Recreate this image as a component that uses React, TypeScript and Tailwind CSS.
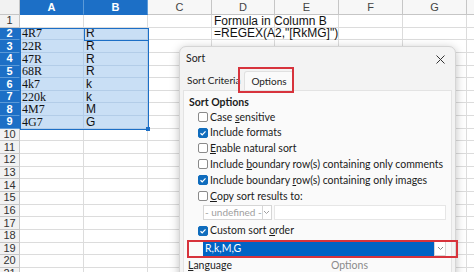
import React from 'react';

const cols = [
    { name: 'A', w: 'w-[64px]' },
    { name: 'B', w: 'w-[64px]' },
    { name: 'C', w: 'w-[64px]' },
    { name: 'D', w: 'w-[63px]' },
    { name: 'E', w: 'w-[64px]' },
    { name: 'F', w: 'w-[64px]' },
    { name: 'G', w: 'w-[64px]' },
    { name: '', w: 'w-[40px]' },
];

const dataA = ['4R7', '22R', '47R', '68R', '4k7', '220k', '4M7', '4G7'];
const dataB = ['R', 'R', 'R', 'R', 'k', 'k', 'M', 'G'];

const Check = ({ on }: { on?: boolean }) => (
    <span
        className={`w-[10px] h-[10px] rounded-[2px] border flex items-center justify-center shrink-0 ${
            on ? 'bg-[#0f6cbd] border-[#0f6cbd]' : 'bg-white border-[#8a8a8a]'
        }`}
    >
        {on && (
            <svg width="8" height="8" viewBox="0 0 8 8">
                <path d="M1.5 4.2 L3.2 5.8 L6.5 2.3" stroke="white" strokeWidth="1.2" fill="none" />
            </svg>
        )}
    </span>
);

const Option = ({ on, children }: { on?: boolean; children: React.ReactNode }) => (
    <div className="flex items-center gap-[2px] h-[15.8px] pl-[14px]">
        <Check on={on} />
        <span className="text-[10.5px] text-[#1b1b1b] leading-none whitespace-nowrap">{children}</span>
    </div>
);

const Sheet = () => {
    const rows = Array.from({ length: 21 }, (_, i) => i + 1);
    return (
        <div className="flex flex-col font-['Liberation_Sans',sans-serif] text-[11px]">
            {/* column headers */}
            <div className="flex h-[15px]">
                <div className="w-[20px] shrink-0 bg-[#f2f2f2] border-r border-b border-[#c6c6c6]" />
                {cols.map((c, i) => (
                    <div
                        key={i}
                        className={`${c.w} shrink-0 flex items-center justify-center border-r border-b ${
                            i < 2
                                ? 'bg-[#1c6fc6] text-white font-bold border-[#1c6fc6] border-r-[#5b9ad8]'
                                : 'bg-[#f7f7f7] text-[#444] border-[#c6c6c6]'
                        }`}
                    >
                        {c.name}
                    </div>
                ))}
            </div>
            {rows.map((r) => {
                const sel = r >= 2 && r <= 9;
                return (
                    <div key={r} className="flex h-[12.65px]">
                        <div
                            className={`w-[20px] shrink-0 flex items-center justify-center border-r border-b leading-none ${
                                sel
                                    ? 'bg-[#1c6fc6] text-white font-bold border-[#1c6fc6] border-b-[#5b9ad8]'
                                    : 'bg-[#f2f2f2] text-[#333] border-[#c6c6c6]'
                            }`}
                        >
                            {r}
                        </div>
                        {cols.map((c, i) => {
                            const inSel = sel && i < 2;
                            let text: string | null = null;
                            let cls = '';
                            if (inSel && i === 0) {
                                text = dataA[r - 2];
                                cls = "font-['Liberation_Serif',serif] text-[12px]";
                            }
                            if (inSel && i === 1) {
                                text = dataB[r - 2];
                                cls = 'text-[12px]';
                            }
                            if (r === 1 && i === 3) text = 'Formula in Column B';
                            if (r === 2 && i === 3) text = '=REGEX(A2,"[RkMG]")';
                            // D overflows into E like a real sheet
                            if (i === 3) cls = 'relative z-[1] text-[12px]';
                            return (
                                <div
                                    key={i}
                                    className={`${c.w} shrink-0 border-r border-b whitespace-nowrap leading-none flex items-center pl-[2px] text-[#111] ${
                                        inSel ? 'bg-[#c9dff5] border-[#b3cde8]' : 'bg-white border-[#dcdcdc]'
                                    } ${cls}`}
                                >
                                    {text}
                                </div>
                            );
                        })}
                    </div>
                );
            })}
        </div>
    );
};

const Dialog = () => (
    <div className="absolute z-20 left-[179px] top-[46px] w-[277px] h-[240px] bg-[#f3f3f3] rounded-[7px] border border-[#d5d5d5] shadow-[0_2px_10px_rgba(0,0,0,0.25)] font-['Lato',sans-serif] flex flex-col">
        <div className="h-[24px] flex items-center justify-between pl-[6px] pr-[9px]">
            <span className="text-[10.5px] text-[#222]">Sort</span>
            <svg width="11" height="11" viewBox="0 0 11 11">
                <path d="M1.5 1.5 L9.5 9.5 M9.5 1.5 L1.5 9.5" stroke="#333" strokeWidth="1" />
            </svg>
        </div>
        <div className="flex items-end h-[19px] pl-[3px] text-[10px] text-[#222]">
            <div className="px-[4px] h-[19px] flex items-center">Sort Criteria</div>
            <div className="px-[6px] h-[19px] flex items-center bg-[#fafafa] border-t border-x border-[#e0e0e0] rounded-t-[3px]">
                Options
            </div>
        </div>
        <div className="mx-[3px] flex-1 bg-[#fafafa] border border-[#e3e3e3] pt-[5px] flex flex-col">
            <div className="text-[10.5px] font-bold text-[#1b1b1b] pl-[5px] h-[13px] flex items-center">Sort Options</div>
            <Option>
                Case <u>s</u>ensitive
            </Option>
            <Option on>Include formats</Option>
            <Option>
                <u>E</u>nable natural sort
            </Option>
            <Option>
                Include <u>b</u>oundary row(s) containing only comments
            </Option>
            <Option on>
                Include boundary <u>r</u>ow(s) containing only images
            </Option>
            <Option>
                <u>C</u>opy sort results to:
            </Option>
            <div className="flex items-center gap-[2px] pl-[19px] pr-[5px] h-[17px]">
                <div className="w-[69px] h-[15px] bg-white border border-[#d6d6d6] flex items-center text-[10px] text-[#a0a0a0]">
                    <span className="flex-1 pl-[1px] leading-none whitespace-nowrap">- undefined -</span>
                    <span className="w-[12px] h-full border-l border-[#d6d6d6] flex items-center justify-center">
                        <svg width="7" height="5" viewBox="0 0 7 5">
                            <path d="M1 1 L3.5 3.5 L6 1" stroke="#a0a0a0" fill="none" />
                        </svg>
                    </span>
                </div>
                <div className="flex-1 h-[15px] bg-white border border-[#e6e6e6]" />
            </div>
            <div className="mt-[2px]">
                <Option on>
                    Custom sort <u>o</u>rder
                </Option>
            </div>
            <div className="flex items-center pl-[19px] pr-[5px] h-[18px] mt-[1px]">
                <div className="flex-1 h-[15px] bg-[#0063c4] flex items-center text-[10.5px] text-white pl-[2px] leading-none">
                    R,k,M,G
                </div>
                <span className="w-[12px] h-[15px] bg-white border border-[#d6d6d6] flex items-center justify-center">
                    <svg width="7" height="5" viewBox="0 0 7 5">
                        <path d="M1 1 L3.5 3.5 L6 1" stroke="#888" fill="none" />
                    </svg>
                </span>
            </div>
            <div className="flex text-[10.5px] h-[14px] mt-[1px] items-center pl-[4px]">
                <span className="w-[143px] text-[#222]">
                    <u>L</u>anguage
                </span>
                <span className="text-[#8a8a8a]">Options</span>
            </div>
        </div>
    </div>
);

export default function App() {
    return (
        <div className="relative w-[474px] h-[272px] overflow-hidden bg-white">
            <Sheet />
            {/* selection outline A2:B9 */}
            <div className="absolute left-[20px] top-[28px] w-[129px] h-[102px] border border-[#1c6fc6] pointer-events-none" />
            <div className="absolute left-[84px] top-[28px] w-[65px] h-[13px] border-[1.5px] border-[#1c6fc6] pointer-events-none" />
            <div className="absolute left-[146px] top-[127px] w-[4px] h-[4px] bg-[#1c6fc6]" />
            <Dialog />
            {/* red annotation boxes */}
            <div className="absolute z-30 left-[238px] top-[67px] w-[56px] h-[26px] border-2 border-[#d7333c] pointer-events-none" />
            <div className="absolute z-30 left-[187px] top-[240px] w-[271px] h-[18px] border-2 border-[#d7333c] pointer-events-none" />
        </div>
    );
}
